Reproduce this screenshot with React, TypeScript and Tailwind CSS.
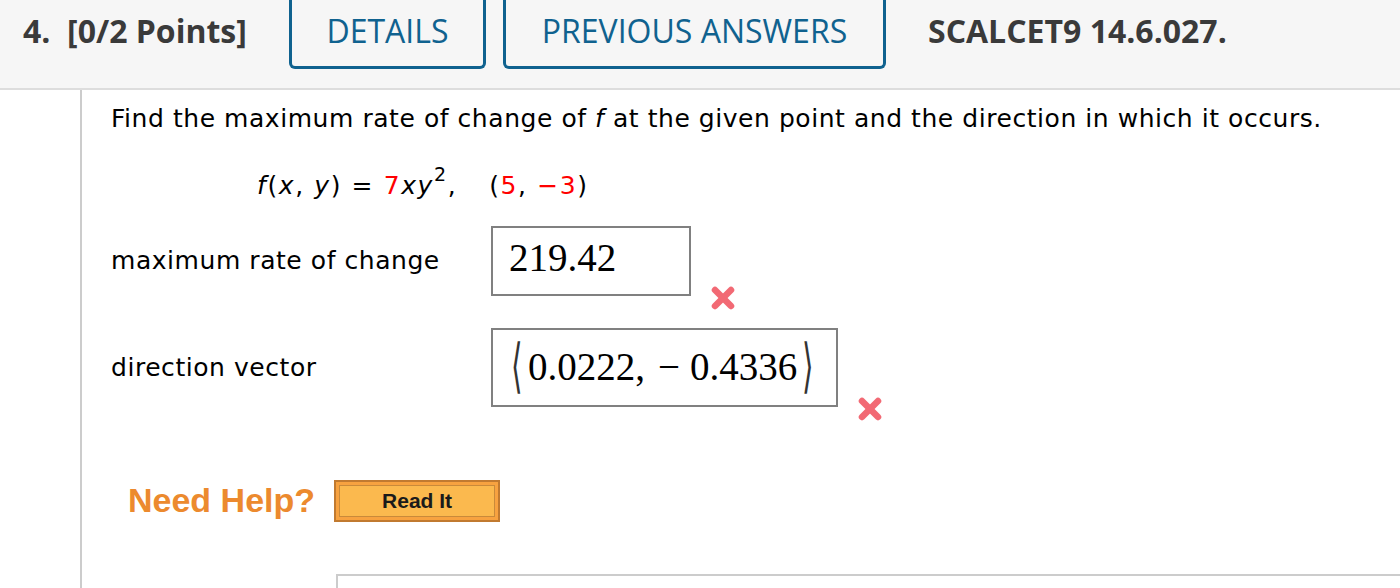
import { ReactNode } from "react";

function RedX() {
    return (
        <svg width="28" height="28" viewBox="0 0 28 28" className="shrink-0">
            <g stroke="#f0505c" strokeWidth="6.5" strokeLinecap="round" opacity="0.85">
                <line x1="6" y1="6" x2="22" y2="22" />
                <line x1="22" y1="6" x2="6" y2="22" />
            </g>
        </svg>
    );
}

function AnswerRow({ label, children, boxClass, xClass }: { label: string; children: ReactNode; boxClass: string; xClass: string }) {
    return (
        <div className="flex items-center">
            <div className="w-[380px] shrink-0 text-[25px] tracking-[0.55px] text-black">{label}</div>
            <div className="flex items-end">
                <div className={`border-2 border-[#808080] flex items-center pl-[16px] ${boxClass}`} style={{ fontFamily: '"Liberation Serif", "DejaVu Serif", serif' }}>
                    {children}
                </div>
                <div className={xClass}>
                    <RedX />
                </div>
            </div>
        </div>
    );
}

export default function App() {
    return (
        <div className="w-[1400px] h-[588px] bg-white overflow-hidden">
            {/* header */}
            <div className="h-[90px] bg-[#f6f6f6] border-b-2 border-[#dddddd] flex items-start" style={{ fontFamily: '"Open Sans", sans-serif' }}>
                <div className="pl-[23px] pt-[7px] text-[32px] font-bold text-[#3a3a3a] w-[289px] shrink-0">
                    4.&nbsp; [0/2 Points]
                </div>
                <div className="w-[197px] h-[69px] pb-[4px] border-[3px] border-t-0 border-[#10628f] rounded-b-[6px] flex items-center justify-center text-[32px] text-[#10628f]">
                    DETAILS
                </div>
                <div className="w-[383px] h-[69px] pb-[4px] ml-[17px] border-[3px] border-t-0 border-[#10628f] rounded-b-[6px] flex items-center justify-center text-[32px] text-[#10628f]">
                    PREVIOUS ANSWERS
                </div>
                <div className="pl-[42px] pt-[7px] text-[32px] font-bold text-[#3a3a3a]">
                    SCALCET9 14.6.027.
                </div>
            </div>

            {/* body */}
            <div className="flex h-[498px]">
                <div className="w-[80px] shrink-0" />
                <div className="flex-1 border-l-2 border-[#cccccc] pl-[29px] pt-[11px] relative" style={{ fontFamily: '"DejaVu Sans", Verdana, sans-serif' }}>
                    <p className="text-[25px] tracking-[0.55px] text-black leading-[36px]">
                        Find the maximum rate of change of <i>f</i> at the given point and the direction in which it occurs.
                    </p>

                    <p className="text-[25px] tracking-[1.6px] text-black leading-[36px] mt-[31px] pl-[146px]">
                        <i>f</i>(<i>x</i>, <i>y</i>) = <span className="text-[#ff0000]">7</span><i>xy</i>
                        <sup className="text-[19px] -top-[13px]">2</sup>,<span className="inline-block w-[32px]" />(<span className="text-[#ff0000]">5</span>, <span className="text-[#ff0000]">−3</span>)
                    </p>

                    <div className="mt-[22px] flex flex-col gap-[32px]">
                        <AnswerRow label="maximum rate of change" boxClass="w-[200px] h-[70px] text-[39px]" xClass="ml-[18px] -mb-[16px]">
                            <span className="-mt-[6px]">219.42</span>
                        </AnswerRow>
                        <AnswerRow label="direction vector" boxClass="w-[347px] h-[79px] text-[39px]" xClass="ml-[18px] -mb-[16px]">
                            <span className="inline-block scale-y-[1.5] scale-x-[0.75] font-extralight text-[#333]" style={{ fontFamily: '"DejaVu Sans", sans-serif' }}>⟨</span>
                            <span className="ml-[4px]">0.0222,</span>
                            <span className="ml-[13px]">−</span>
                            <span className="ml-[10px]">0.4336</span>
                            <span className="ml-[3px] inline-block scale-y-[1.5] scale-x-[0.75] font-extralight text-[#333]" style={{ fontFamily: '"DejaVu Sans", sans-serif' }}>⟩</span>
                        </AnswerRow>
                    </div>

                    <div className="mt-[68px] flex items-center pl-[17px]" style={{ fontFamily: '"Liberation Sans", Arial, sans-serif' }}>
                        <span className="text-[34px] font-bold text-[#ec8a2e]">Need Help?</span>
                        <button className="ml-[19px] w-[166px] h-[42px] border-2 border-[#c17a30] bg-[#f7a240] p-[3px]">
                            <div className="w-full h-full bg-[#fbb94e] border border-[#c98a3a] flex items-center justify-center text-[21px] font-bold text-[#1a1a1a]">
                                Read It
                            </div>
                        </button>
                    </div>

                    <div className="absolute left-[254px] top-[484px] w-[1100px] h-[40px] border-2 border-[#cccccc]" />
                </div>
            </div>
        </div>
    );
}
